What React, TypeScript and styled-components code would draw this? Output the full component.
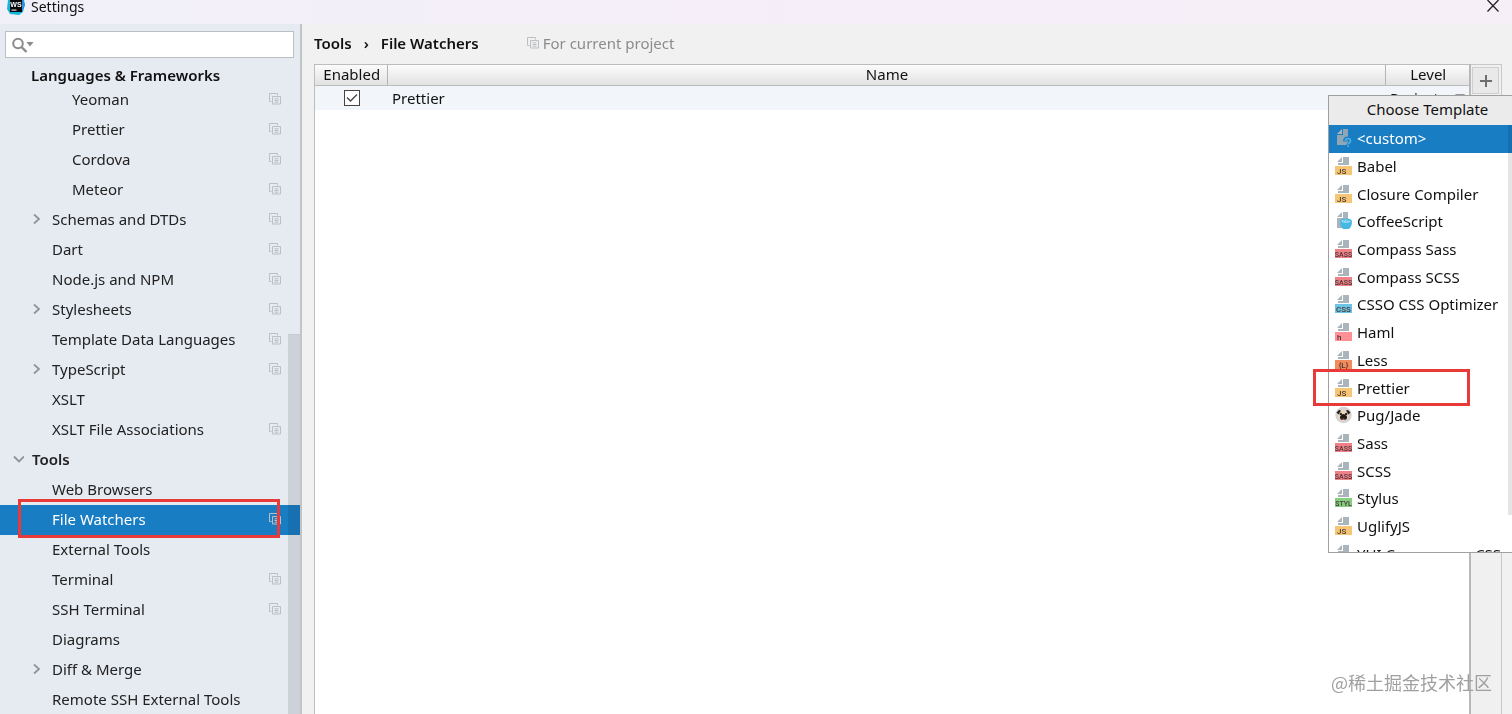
import React from "react";
import styled, { createGlobalStyle } from "styled-components";

const GlobalStyle = createGlobalStyle`
  * { box-sizing: border-box; }
  body { margin: 0; }
  button { font: inherit; color: inherit; background: none; border: 0; padding: 0; text-align: left; }
`;

const Window = styled.div`
  position: relative;
  display: flex;
  flex-direction: column;
  height: 100vh;
  overflow: hidden;
  background: #f1f1f1;
  color: #111;
  font-family: "Noto Sans", "Noto Sans CJK SC", sans-serif;
  font-size: 15px;
  line-height: 20px;
`;

const TitleBar = styled.header`
  display: flex;
  align-items: flex-start;
  justify-content: space-between;
  height: 24px;
  flex: none;
  padding: 0 12px 0 7px;
  background: linear-gradient(90deg, #f1f0f8, #f6eef8 60%, #f6eff7);
`;

const AppName = styled.h1`
  display: flex;
  align-items: flex-start;
  gap: 6px;
  margin: 0;
  font-size: 14px;
  font-weight: 400;
  line-height: 13px;
`;

const CloseButton = styled.button`
  display: flex;
`;

const Body = styled.div`
  display: flex;
  flex: 1;
  min-height: 0;
`;

const Sidebar = styled.aside`
  position: relative;
  display: flex;
  flex-direction: column;
  flex: none;
  width: 302px;
  padding-top: 7px;
  background: #e6eaf1;
  border-right: 2px solid #c2c5c8;
`;

const SearchBox = styled.label`
  display: flex;
  align-items: center;
  flex: none;
  height: 27px;
  margin: 0 6px 0 5px;
  padding: 0 6px;
  background: #fff;
  border: 1px solid #bcbfc2;
`;

const SearchInput = styled.input`
  flex: 1;
  min-width: 0;
  border: 0;
  outline: 0;
  background: none;
  font: inherit;
`;

const StickyGroup = styled.h2`
  flex: none;
  margin: 7px 0 0;
  padding-left: 31px;
  font-size: 15px;
  line-height: 20px;
  font-weight: 600;
`;

const Tree = styled.ul`
  list-style: none;
  margin: 0;
  padding: 0;
`;

const TreeButton = styled.button<{ $depth: number; $selected?: boolean }>`
  display: flex;
  align-items: center;
  width: 100%;
  height: 30px;
  padding: 0 19px 2px ${(p) => p.$depth * 20 - 8}px;
  font-weight: ${(p) => (p.$depth === 1 ? 600 : 400)};
  color: ${(p) => (p.$selected ? "#fff" : "#222")};
  background: ${(p) => (p.$selected ? "#197dc4" : "transparent")};
`;

const Toggle = styled.span`
  display: flex;
  width: 20px;
`;

const TreeLabel = styled.span`
  flex: 1;
`;

const SidebarScrollbar = styled.div`
  position: absolute;
  top: 310px;
  right: 0;
  bottom: 0;
  width: 12px;
  background: #e2e5e4;
  border-top: 1px solid #dadddd;
  mix-blend-mode: multiply;
`;

const Main = styled.main`
  display: flex;
  flex-direction: column;
  flex: 1;
  min-width: 0;
  padding: 0 10px 0 12px;
`;

const Breadcrumb = styled.nav`
  display: flex;
  align-items: center;
  height: 40px;
  flex: none;
  gap: 12px;
  padding-bottom: 2px;
  font-weight: 600;
  color: #111;
`;

const Scope = styled.span`
  display: flex;
  align-items: center;
  gap: 4px;
  margin-left: 36px;
  font-weight: 400;
  color: #8c8c8c;
`;

const Content = styled.div`
  display: flex;
  flex: 1;
  min-height: 0;
`;

const TablePane = styled.div`
  flex: 1;
  background: #fff;
  border: 1px solid #bdbdbd;
  border-bottom: 0;
  border-right: 2px solid #b8b8b8;
`;

const Table = styled.table`
  width: 100%;
  table-layout: fixed;
  border-collapse: collapse;
`;

const HeadCell = styled.th<{ $width?: number }>`
  width: ${(p) => (p.$width ? `${p.$width}px` : "auto")};
  height: 20px;
  padding: 0 0 0 2px;
  font-weight: 400;
  line-height: 19px;
  background: linear-gradient(#fbfbfb, #e2e2e2);
  border-bottom: 1px solid #bcbcbc;
  & + & { border-left: 1px solid #b4b4b4; }
`;

const Cell = styled.td<{ $center?: boolean }>`
  height: 25px;
  padding: ${(p) => (p.$center ? "0 0 0 2px" : "0 4px 0 5px")};
  text-align: ${(p) => (p.$center ? "center" : "left")};
  background: #f2f5f9;
`;

const CheckBox = styled.input`
  appearance: none;
  display: block;
  width: 16px;
  height: 16px;
  margin: 0;
  border: 1px solid #444;
  background: #fff;
`;

const CheckWrap = styled.label`
  display: grid;
  justify-content: center;
  align-items: center;
  > * { grid-area: 1 / 1; }
  svg { z-index: 1; pointer-events: none; }
`;

const LevelSelect = styled.div`
  display: flex;
  justify-content: space-between;
`;

const SideToolbar = styled.div`
  width: 31px;
  flex: none;
  padding: 2px 1px 0 1px;
  background: #f0f0f0;
  border: 1px solid #c8c8c8;
  border-left: 0;
  border-bottom: 0;
`;

const AddButton = styled.button`
  display: flex;
  align-items: center;
  justify-content: center;
  width: 27px;
  height: 27px;
  border: 1px solid #cfcfcf;
  background: #e9e9e9;
`;

const Popup = styled.section`
  position: absolute;
  top: 95px;
  right: -15px;
  width: 199px;
  height: 458px;
  overflow: hidden;
  background: #fff;
  border: 1px solid #a0a0a0;
`;

const PopupTitle = styled.h2`
  height: 29px;
  margin: 0;
  font-size: 15px;
  font-weight: 400;
  line-height: 27px;
  text-align: center;
  background: #ebebeb;
`;

const TemplateList = styled.ul`
  display: grid;
  grid-template-rows: repeat(16, 1fr);
  height: 443px;
  margin: 0;
  padding: 0;
  list-style: none;
`;

const TemplateItem = styled.li<{ $selected?: boolean }>`
  display: flex;
  min-height: 0;
  color: ${(p) => (p.$selected ? "#fff" : "#111")};
  background: ${(p) => (p.$selected ? "#197dc4" : "transparent")};
`;

const TemplateButton = styled.button`
  display: flex;
  align-items: center;
  gap: 5px;
  width: 100%;
  padding: 0 0 1px 6px;
  white-space: nowrap;
`;

const PopupScrollbar = styled.div`
  position: absolute;
  top: 29px;
  right: 0;
  width: 18px;
  height: 390px;
  background: rgba(0, 0, 0, 0.1);
`;

const Highlight = styled.div`
  position: absolute;
  border: 3px solid #e93a3a;
  pointer-events: none;
`;

const TreeHighlight = styled(Highlight)`
  top: 475px;
  left: 18px;
  right: 20px;
  height: 39px;
`;

const TemplateHighlight = styled(Highlight)`
  top: 369px;
  right: 42px;
  width: 157px;
  height: 37px;
`;

const Watermark = styled.p`
  position: absolute;
  right: 20px;
  bottom: 20px;
  margin: 0;
  font-family: "Noto Sans CJK SC", sans-serif;
  font-size: 18px;
  font-weight: 400;
  line-height: 24px;
  color: #a0a0a0;
`;

const CopyIcon = () => (
  <svg width="12" height="12" viewBox="0 0 12 12" fill="none" stroke="#bcc0c4" aria-hidden="true">
    <path d="M2.500 8.500H.5V.5h8V2.500" />
    <path d="M3.500 3.500h8v7.500h-8zM5.500 5.800h4M5.500 7.500h4M5.500 9.200h4" />
  </svg>
);

const Chevron = ({ open }: { open?: boolean }) => (
  <svg width="12" height="12" viewBox="0 0 12 12" fill="none" stroke="#929498" strokeWidth="1.8" aria-hidden="true">
    <path d={open ? "M2 3.500 7 8.500 12 3.500" : "M2 1.500 7 6 2 10.500"} />
  </svg>
);

const Logo = () => (
  <svg width="18" height="15" viewBox="0 0 18 15" aria-hidden="true">
    <path d="M1 0h14l3 4-2 8-4 3-9-1L0 9z" fill="#16b5dc" />
    <path d="M14 0h3l1 5-3 7z" fill="#2f8fe0" />
    <path d="M3 0h12v12H3z" fill="#07090c" />
    <text x="9" y="7" textAnchor="middle" fontSize="7" fontWeight="700" fill="#fff" fontFamily="Liberation Sans">WS</text>
    <path d="M4.500 9.500h5v1.200h-5z" fill="#ddd" />
  </svg>
);

type Kind = "custom" | "coffee" | "pug" | "tag";

const FileIcon = ({ kind, tag = "", color }: { kind: Kind; tag?: string; color?: string }) => {
  if (kind === "pug")
    return (
      <svg width="17" height="18" viewBox="0 0 17 18" aria-hidden="true">
        <circle cx="8.500" cy="9" r="8.200" fill="#d6d4d3" />
        <path d="M3.500 5.500q5-3 10 0l.5 5q-2 4-5.500 4t-5.500-4z" fill="#ecd9bd" />
        <path d="M1.500 6.500 4 4l2 .5-2.500 4zM15.500 6.500 13 4l-2 .5 2.500 4z" fill="#222" />
        <path d="M8.500 8q3.500 1 3.500 3.500T8.500 14 5 11.500 8.500 8z" fill="#1c1c1c" />
        <path d="M7.500 12.500h2v1.500h-2z" fill="#c55" />
        <circle cx="5.800" cy="8" r="1.200" fill="#222" />
        <circle cx="11.200" cy="8" r="1.200" fill="#222" />
      </svg>
    );
  const full = kind !== "tag";
  const short = tag.length < 3;
  return (
    <svg width="17" height="18" viewBox="0 0 17 18" aria-hidden="true">
      <path d="M7 0v5H2z" fill="#aab4bb" />
      <path d={full ? "M8 0h5v16H2V6h6z" : "M8 0h6v8H3V6h5z"} fill={kind === "custom" ? "#8fa6b5" : "#aab4bb"} />
      {kind === "custom" && (
        <g>
          <path d="M10 12.500q0-3 3-3t3 2.500q0 1.500-1.600 2.300-1 .500-1 1.700" fill="none" stroke="#197dc4" strokeWidth="4" />
          <path d="M10.500 12q0-2.500 2.500-2.500T15.500 12q0 1.200-1.400 2-1 .600-1 1.600" fill="none" stroke="#4fb0e2" strokeWidth="1.700" />
          <path d="M12.200 16.400h1.800V18h-1.800z" fill="#4fb0e2" />
        </g>
      )}
      {kind === "coffee" && (
        <g>
          <path d="M5 9.500q0-3 6-3t6 3q0 5-3 7.500H8q-3-2.500-3-7.500z" fill="#45b8e4" />
          <path d="M6 9.300q2-2 5-1.500t5 1.500q-2 1.500-5 1.500T6 9.300z" fill="#b9e4f5" />
          <path d="M8 9.500l1.500-1 1.500 1 1.500-1 1.500 1" fill="none" stroke="#45b8e4" />
        </g>
      )}
      {kind === "tag" && (
        <g>
          <path d="M0 9h17v9H0z" fill={color} />
          <text
            x={short ? 2 : 8.5}
            y="16.500"
            textAnchor={short ? "start" : "middle"}
            fontSize={tag.length > 3 ? 7 : 8}
            fontWeight="500"
            fill="#4a3535"
            fontFamily="Roboto, sans-serif"
          >
            {tag}
          </text>
        </g>
      )}
    </svg>
  );
};

const tree: { label: string; depth: number; shared?: boolean; open?: boolean; selected?: boolean; parent?: boolean }[] = [
  { label: "Yeoman", depth: 3, shared: true },
  { label: "Prettier", depth: 3, shared: true },
  { label: "Cordova", depth: 3, shared: true },
  { label: "Meteor", depth: 3, shared: true },
  { label: "Schemas and DTDs", depth: 2, shared: true, parent: true },
  { label: "Dart", depth: 2, shared: true },
  { label: "Node.js and NPM", depth: 2, shared: true },
  { label: "Stylesheets", depth: 2, shared: true, parent: true },
  { label: "Template Data Languages", depth: 2, shared: true },
  { label: "TypeScript", depth: 2, shared: true, parent: true },
  { label: "XSLT", depth: 2 },
  { label: "XSLT File Associations", depth: 2, shared: true },
  { label: "Tools", depth: 1, parent: true, open: true },
  { label: "Web Browsers", depth: 2 },
  { label: "File Watchers", depth: 2, shared: true, selected: true },
  { label: "External Tools", depth: 2 },
  { label: "Terminal", depth: 2, shared: true },
  { label: "SSH Terminal", depth: 2, shared: true },
  { label: "Diagrams", depth: 2 },
  { label: "Diff & Merge", depth: 2, parent: true },
  { label: "Remote SSH External Tools", depth: 2 },
];

const YELLOW = "#f5c675";
const RED = "#ee8088";

const templates: { label: string; kind: Kind; tag?: string; color?: string }[] = [
  { label: "<custom>", kind: "custom" },
  { label: "Babel", kind: "tag", tag: "JS", color: YELLOW },
  { label: "Closure Compiler", kind: "tag", tag: "JS", color: YELLOW },
  { label: "CoffeeScript", kind: "coffee" },
  { label: "Compass Sass", kind: "tag", tag: "SASS", color: RED },
  { label: "Compass SCSS", kind: "tag", tag: "SASS", color: RED },
  { label: "CSSO CSS Optimizer", kind: "tag", tag: "CSS", color: "#6cc4e4" },
  { label: "Haml", kind: "tag", tag: "h", color: "#ff9096" },
  { label: "Less", kind: "tag", tag: "{L}", color: "#f28c5c" },
  { label: "Prettier", kind: "tag", tag: "JS", color: YELLOW },
  { label: "Pug/Jade", kind: "pug" },
  { label: "Sass", kind: "tag", tag: "SASS", color: RED },
  { label: "SCSS", kind: "tag", tag: "SASS", color: RED },
  { label: "Stylus", kind: "tag", tag: "STYL", color: "#86cf80" },
  { label: "UglifyJS", kind: "tag", tag: "JS", color: YELLOW },
  { label: "YUI Compressor CSS", kind: "tag", tag: "CSS", color: "#6cc4e4" },
];

export default function App() {
  return (
    <Window>
      <GlobalStyle />
      <TitleBar>
        <AppName><Logo />Settings</AppName>
        <CloseButton aria-label="Close">
          <svg width="14" height="14" viewBox="0 0 14 14" stroke="#222" strokeWidth="1.3" aria-hidden="true">
            <path d="M1.500 0 12.500 11.500M12.500 0 1.500 11.500" />
          </svg>
        </CloseButton>
      </TitleBar>
      <Body>
        <Sidebar>
          <SearchBox>
            <svg width="22" height="16" viewBox="0 0 22 16" fill="none" aria-hidden="true">
              <circle cx="6" cy="6.500" r="4.800" stroke="#8b8b8b" strokeWidth="2" />
              <path d="M9.500 10l5 5" stroke="#8b8b8b" strokeWidth="2.400" />
              <path d="M14.500 5h7l-3.500 4.500z" fill="#8b8b8b" />
            </svg>
            <SearchInput aria-label="Search settings" />
          </SearchBox>
          <StickyGroup>Languages &amp; Frameworks</StickyGroup>
          <Tree>
            {tree.map((n) => (
              <li key={n.label}>
                <TreeButton $depth={n.depth} $selected={n.selected}>
                  <Toggle>{n.parent && <Chevron open={n.open} />}</Toggle>
                  <TreeLabel>{n.label}</TreeLabel>
                  {n.shared && <CopyIcon />}
                </TreeButton>
              </li>
            ))}
          </Tree>
          <SidebarScrollbar />
          <TreeHighlight />
        </Sidebar>
        <Main>
          <Breadcrumb>
            <span>Tools</span>
            <span>›</span>
            <span>File Watchers</span>
            <Scope><CopyIcon />For current project</Scope>
          </Breadcrumb>
          <Content>
            <TablePane>
              <Table>
                <thead>
                  <tr>
                    <HeadCell $width={72}>Enabled</HeadCell>
                    <HeadCell>Name</HeadCell>
                    <HeadCell $width={84}>Level</HeadCell>
                  </tr>
                </thead>
                <tbody>
                  <tr>
                    <Cell $center>
                      <CheckWrap>
                        <CheckBox type="checkbox" defaultChecked aria-label="Prettier enabled" />
                        <svg width="16" height="16" viewBox="0 0 16 16" fill="none" stroke="#444" strokeWidth="1.300" aria-hidden="true">
                          <path d="M3 7.500l3.500 3.500L13 4.500" />
                        </svg>
                      </CheckWrap>
                    </Cell>
                    <Cell>Prettier</Cell>
                    <Cell>
                      <LevelSelect>
                        Project
                        <svg width="10" height="20" viewBox="0 0 10 20" aria-hidden="true"><path d="M0 6h10l-5 6z" fill="#999" /></svg>
                      </LevelSelect>
                    </Cell>
                  </tr>
                </tbody>
              </Table>
            </TablePane>
            <SideToolbar>
              <AddButton aria-label="Add">
                <svg width="12" height="12" viewBox="0 0 12 12" stroke="#6e6e6e" strokeWidth="2" aria-hidden="true"><path d="M6 0v12M0 6h12" /></svg>
              </AddButton>
            </SideToolbar>
          </Content>
        </Main>
      </Body>
      <Popup aria-label="Choose Template">
        <PopupTitle>Choose Template</PopupTitle>
        <TemplateList>
          {templates.map((t, i) => (
            <TemplateItem key={t.label} $selected={i === 0}>
              <TemplateButton>
                <FileIcon kind={t.kind} tag={t.tag} color={t.color} />
                {t.label}
              </TemplateButton>
            </TemplateItem>
          ))}
        </TemplateList>
        <PopupScrollbar />
      </Popup>
      <TemplateHighlight />
      <Watermark>@稀土掘金技术社区</Watermark>
    </Window>
  );
}
